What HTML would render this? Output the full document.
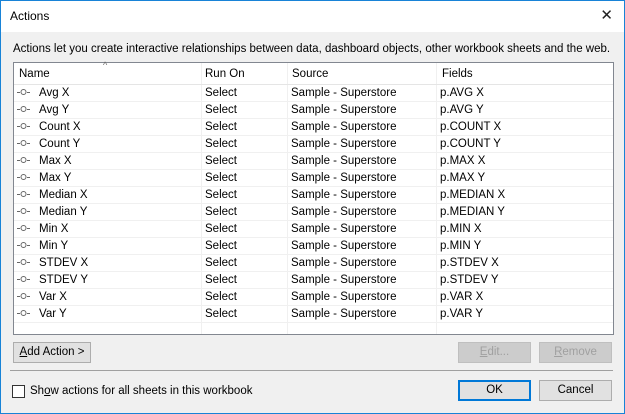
<!DOCTYPE html><html><head><style>
*{box-sizing:border-box;margin:0;padding:0}
body{width:625px;height:414px;overflow:hidden;font-family:"Liberation Sans",sans-serif;font-size:11.5px;color:#000;background:#f0f0f0;position:relative;border:1px solid #1883d7}
.title{position:absolute;left:0;top:0;width:623px;height:31px;background:#fff}
.title span{position:absolute;left:9px;top:8px;font-size:12px}
.x{position:absolute;right:11px;top:5px;font-size:15px;font-weight:normal;color:#222}
.desc{position:absolute;left:12px;top:42px}
.tbl{position:absolute;left:12px;top:61px;width:601px;height:273px;background:#fff;border:1px solid #828790}
.row{position:absolute;left:0;width:599px;height:17px;border-bottom:1px solid #f0f0f0}
.row div{position:absolute;top:2px;white-space:nowrap}
.vl{position:absolute;top:0;bottom:0;width:1px;background:#f0f0f0}
.btn{position:absolute;height:21px;background:#e1e1e1;border:1px solid #adadad;text-align:center;line-height:19px}
.dis{color:#a0a0a0;background:#ccc;border-color:#bfbfbf}
u{text-decoration:underline}
</style></head><body>
<div class="title"><span>Actions</span><div class="x">✕</div></div>
<div class="desc">Actions let you create interactive relationships between data, dashboard objects, other workbook sheets and the web.</div>
<div class="tbl">
<div class="vl" style="left:187px"></div><div class="vl" style="left:273px"></div><div class="vl" style="left:422px"></div>
<div style="position:absolute;left:89px;top:-3px;font-size:9px;color:#666">^</div>
<div class="row" style="top:0;height:22px;border-bottom:1px solid #e5e5e5"><div style="left:5px;top:5px">Name</div><div style="left:191px;top:5px">Run On</div><div style="left:278px;top:5px">Source</div><div style="left:428px;top:5px">Fields</div></div>
<div id="rows"></div>
</div>
<script>
var n=[["Avg X","AVG X"],["Avg Y","AVG Y"],["Count X","COUNT X"],["Count Y","COUNT Y"],["Max X","MAX X"],["Max Y","MAX Y"],["Median X","MEDIAN X"],["Median Y","MEDIAN Y"],["Min X","MIN X"],["Min Y","MIN Y"],["STDEV X","STDEV X"],["STDEV Y","STDEV Y"],["Var X","VAR X"],["Var Y","VAR Y"],["",""]];
var h="";n.forEach(function(r,i){h+='<div class="row" style="top:'+(22+i*17)+'px">'+(r[0]?'<svg style="position:absolute;left:3px;top:3px" width="16" height="9"><path d="M0 4.5H3M10 4.5H13" stroke="#666"/><circle cx="6.5" cy="4" r="2.5" fill="none" stroke="#666"/></svg><div style="left:25px">'+r[0]+'</div><div style="left:191px">Select</div><div style="left:277px">Sample - Superstore</div><div style="left:426px">p.'+r[1]+'</div>':'')+'</div>'});
document.getElementById('rows').outerHTML=h;
</script>
<div class="btn" style="left:12px;top:341px;width:78px"><u>A</u>dd Action &gt;</div>
<div class="btn dis" style="left:457px;top:341px;width:73px"><u>E</u>dit...</div>
<div class="btn dis" style="left:538px;top:341px;width:73px"><u>R</u>emove</div>
<div style="position:absolute;left:9px;top:369px;width:603px;height:1px;background:#a0a0a0"></div>
<div style="position:absolute;left:11px;top:384px;width:13px;height:13px;border:1px solid #333;background:#fff"></div>
<div style="position:absolute;left:29px;top:384px">Sh<u>o</u>w actions for all sheets in this workbook</div>
<div class="btn" style="left:457px;top:379px;width:73px;border:2px solid #0078d7;line-height:17px">OK</div>
<div class="btn" style="left:538px;top:379px;width:73px">Cancel</div>
</body></html>
